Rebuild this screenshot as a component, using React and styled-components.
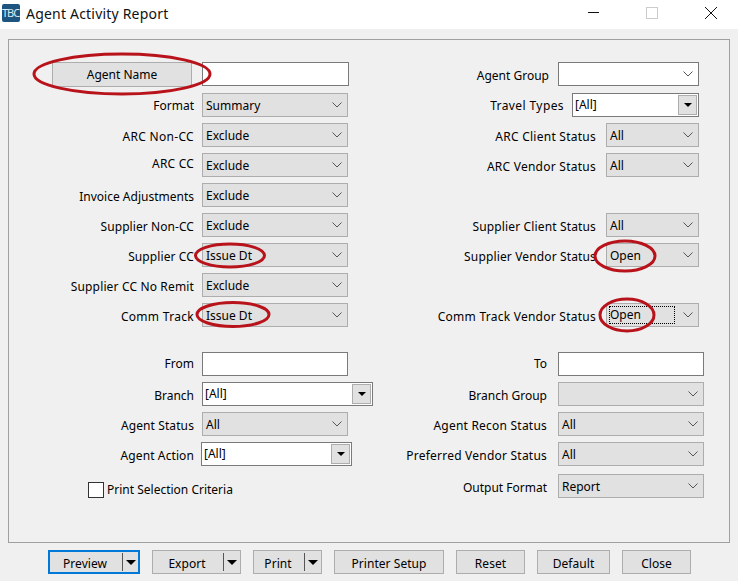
import React from "react";
import styled, { createGlobalStyle } from "styled-components";

const GlobalStyle = createGlobalStyle`
  html, body {
    margin: 0;
    padding: 0;
    background: #f0f0f0;
    font-family: "Noto Sans", "Open Sans", sans-serif;
    font-size: 12px;
    color: #000;
  }
`;

const Window = styled.div`
  position: relative;
  width: 738px;
  height: 581px;
  overflow: hidden;
  background: #f0f0f0;
`;

const TitleBar = styled.div`
  box-sizing: border-box;
  height: 29px;
  background: #fff;
  display: flex;
  align-items: center;
  padding: 0 0 3px 2px;
`;

const AppIcon = styled.div`
  width: 18px;
  height: 18px;
  background: #1d5580;
  border-radius: 2px;
  color: #dfe9f1;
  font-size: 11px;
  letter-spacing: -1px;
  line-height: 18px;
  overflow: hidden;
  white-space: nowrap;
`;

const Title = styled.div`
  margin: 1px 0 0 6px;
  font-size: 14px;
  letter-spacing: 0.2px;
  color: #111;
`;

const WindowButtons = styled.div`
  margin-left: auto;
  display: flex;
  align-items: center;
  padding-right: 21px;
  gap: 47px;
`;

const Panel = styled.div`
  margin: 10px 8px 0;
  height: 504px;
  box-sizing: border-box;
  border: 1px solid #a0a0a0;
  padding-top: 22px;
  display: flex;
`;

const LeftColumn = styled.div`
  width: 364px;
  display: flex;
  flex-direction: column;
  gap: 6px;
`;

const RightColumn = styled.div`
  width: 331px;
  display: flex;
  flex-direction: column;
  gap: 6px;
`;

const Row = styled.div`
  display: flex;
  align-items: center;
  height: 24px;
  flex-shrink: 0;
  margin-top: ${(p) => p.$top || 0}px;
  justify-content: ${(p) => (p.$end ? "flex-end" : "flex-start")};
  padding-right: ${(p) => p.$inset || 0}px;
`;

const Label = styled.span`
  box-sizing: border-box;
  white-space: nowrap;
  text-align: right;
  position: relative;
  top: ${(p) => p.$shift || 0}px;
  letter-spacing: ${(p) => p.$track || 0}px;
  ${(p) => (p.$width ? `width: ${p.$width}px;` : "")}
  margin-right: ${(p) => (p.$gap === undefined ? 8 : p.$gap)}px;
`;

const Button = styled.button`
  box-sizing: border-box;
  height: 24px;
  padding: 0;
  background: #e1e1e1;
  border: 1px solid #adadad;
  font: inherit;
  color: #000;
  display: flex;
  align-items: center;
  justify-content: center;
`;

const NameButton = styled(Button)`
  width: 140px;
  height: 25px;
  margin-left: 43px;
  margin-right: 10px;
`;

const TextInput = styled.div`
  box-sizing: border-box;
  width: ${(p) => p.$width}px;
  height: 24px;
  background: #fff;
  border: 1px solid #7a7a7a;
`;

const Select = styled.div`
  box-sizing: border-box;
  width: ${(p) => p.$width}px;
  height: 24px;
  display: flex;
  align-items: center;
  padding: 0 5px 0 3px;
  background: ${(p) => (p.$white ? "#fff" : "#e1e1e1")};
  border: 1px solid ${(p) => (p.$white ? "#7a7a7a" : "#adadad")};
  svg {
    margin-left: auto;
    flex-shrink: 0;
  }
`;

const FocusText = styled.span`
  width: 66px;
  height: 18px;
  margin-left: -1px;
  box-sizing: border-box;
  border: 1px dotted #000;
  line-height: 15px;
`;

const Combo = styled.div`
  box-sizing: border-box;
  width: ${(p) => p.$width}px;
  height: 24px;
  margin-left: ${(p) => p.$nudge || 0}px;
  background: #fff;
  border: 1px solid #7a7a7a;
  display: flex;
  align-items: center;
  padding: 1px 1px 1px 2px;
`;

const ComboText = styled.span`
  position: relative;
  top: -1px;
`;

const ComboButton = styled.div`
  margin-left: auto;
  width: 19px;
  height: 20px;
  box-sizing: border-box;
  background: #e1e1e1;
  border: 1px solid #adadad;
  display: flex;
  align-items: center;
  justify-content: center;
`;

const CheckRow = styled.div`
  display: flex;
  align-items: center;
  gap: 3px;
  margin: 9px 0 0 79px;
`;

const CheckBox = styled.span`
  box-sizing: border-box;
  width: 16px;
  height: 16px;
  background: #fff;
  border: 1px solid #333;
`;

const Footer = styled.div`
  display: flex;
  gap: 12px;
  margin-top: 7px;
  padding-left: 48px;
`;

const FooterButton = styled(Button)`
  width: ${(p) => p.$width}px;
  letter-spacing: 0.05px;
  ${(p) => (p.$primary ? "border: 2px solid #0078d7;" : "")}
`;

const SplitLabel = styled.span`
  flex: 1;
  text-align: center;
  position: relative;
  top: 1px;
  left: -1px;
`;

const SplitArrow = styled.span`
  width: 17px;
  height: 18px;
  box-sizing: border-box;
  border-left: 1px solid #555;
  margin-right: ${(p) => (p.$primary ? -1 : 0)}px;
  display: flex;
  align-items: center;
  justify-content: center;
`;

const PlainLabel = styled.span`
  position: relative;
  top: 1px;
`;

const Annotations = styled.svg`
  position: absolute;
  left: 0;
  top: 0;
  pointer-events: none;
`;

const Chevron = ({ faint }) => (
  <svg width="10" height="6" viewBox="0 0 10 6">
    <path d="M0.5 0.5 L5 5 L9.5 0.5" fill="none" stroke={faint ? "#8a8a8a" : "#555"} strokeWidth="1" />
  </svg>
);

const Caret = ({ small }) => (
  <svg width={small ? 8 : 10} height={small ? 4 : 5} viewBox="0 0 10 5">
    <path d="M0 0 H10 L5 5 Z" fill="#000" />
  </svg>
);

const SplitButton = ({ width, primary, children }) => (
  <FooterButton $width={width} $primary={primary}>
    <SplitLabel>{children}</SplitLabel>
    <SplitArrow $primary={primary}><Caret /></SplitArrow>
  </FooterButton>
);

const ComboBox = ({ width, nudge }) => (
  <Combo $width={width} $nudge={nudge}>
    <ComboText>[All]</ComboText>
    <ComboButton><Caret small /></ComboButton>
  </Combo>
);

const ovals = [
  [122, 74, 88, 20],
  [230, 255.5, 34.5, 11.5],
  [233, 314.5, 36, 12],
  [625, 256, 30, 15],
  [627, 315, 27, 16],
];

export default function App() {
  return (
    <Window>
      <GlobalStyle />
      <TitleBar>
        <AppIcon>TBC</AppIcon>
        <Title>Agent Activity Report</Title>
        <WindowButtons>
          <svg width="11" height="12" viewBox="0 0 11 12"><path d="M0 5.5 H11" stroke="#111" /></svg>
          <svg width="12" height="12" viewBox="0 0 12 12"><rect x="0.5" y="0.5" width="11" height="11" fill="none" stroke="#ccc" /></svg>
          <svg width="12" height="12" viewBox="0 0 12 12"><path d="M0 0 L12 12 M12 0 L0 12" stroke="#111" /></svg>
        </WindowButtons>
      </TitleBar>
      <Panel>
        <LeftColumn>
          <Row>
            <NameButton>Agent Name</NameButton>
            <TextInput $width={147} />
          </Row>
          <Row $top={1}>
            <Label $width={185}>Format</Label>
            <Select $width={146}>Summary<Chevron /></Select>
          </Row>
          <Row>
            <Label $width={185} $shift={1} $track={0.3}>ARC Non-CC</Label>
            <Select $width={146}>Exclude<Chevron /></Select>
          </Row>
          <Row>
            <Label $width={185} $shift={-2} $track={0.2}>ARC CC</Label>
            <Select $width={146}>Exclude<Chevron /></Select>
          </Row>
          <Row>
            <Label $width={185} $shift={1}>Invoice Adjustments</Label>
            <Select $width={146}>Exclude<Chevron /></Select>
          </Row>
          <Row>
            <Label $width={185} $shift={1} $track={0.07}>Supplier Non-CC</Label>
            <Select $width={146}>Exclude<Chevron /></Select>
          </Row>
          <Row>
            <Label $width={185} $shift={1} $track={0.1}>Supplier CC</Label>
            <Select $width={146}>Issue Dt<Chevron /></Select>
          </Row>
          <Row>
            <Label $width={185} $shift={1} $track={0.15}>Supplier CC No Remit</Label>
            <Select $width={146}>Exclude<Chevron /></Select>
          </Row>
          <Row>
            <Label $width={185} $shift={1} $track={0.3}>Comm Track</Label>
            <Select $width={146}>Issue Dt<Chevron /></Select>
          </Row>
          <Row $top={19}>
            <Label $width={185} $shift={-1}>From</Label>
            <TextInput $width={146} />
          </Row>
          <Row>
            <Label $width={185} $shift={1}>Branch</Label>
            <ComboBox width={171} />
          </Row>
          <Row>
            <Label $width={185} $shift={1} $track={0.1}>Agent Status</Label>
            <Select $width={146}>All<Chevron /></Select>
          </Row>
          <Row>
            <Label $width={185} $shift={1} $track={0.1}>Agent Action</Label>
            <ComboBox width={151} nudge={-1} />
          </Row>
          <CheckRow>
            <CheckBox />
            <span>Print Selection Criteria</span>
          </CheckRow>
        </LeftColumn>
        <RightColumn>
          <Row $end $inset={5}>
            <Label $gap={9} $shift={1}>Agent Group</Label>
            <Select $width={141} $white>&nbsp;<Chevron /></Select>
          </Row>
          <Row $end $inset={5} $top={1}>
            <Label $track={0.4}>Travel Types</Label>
            <ComboBox width={127} />
          </Row>
          <Row $end $inset={5}>
            <Label $gap={10} $shift={1} $track={0.25}>ARC Client Status</Label>
            <Select $width={93}>All<Chevron /></Select>
          </Row>
          <Row $end $inset={5}>
            <Label $gap={10} $shift={1} $track={0.25}>ARC Vendor Status</Label>
            <Select $width={93}>All<Chevron /></Select>
          </Row>
          <Row />
          <Row $end $inset={5}>
            <Label $gap={10} $shift={1} $track={0.14}>Supplier Client Status</Label>
            <Select $width={93}>All<Chevron /></Select>
          </Row>
          <Row $end $inset={5}>
            <Label $gap={10} $shift={1} $track={0.14}>Supplier Vendor Status</Label>
            <Select $width={93}>Open<Chevron /></Select>
          </Row>
          <Row />
          <Row $end $inset={5}>
            <Label $gap={10} $shift={1} $track={0.25}>Comm Track Vendor Status</Label>
            <Select $width={93}><FocusText>Open</FocusText><Chevron /></Select>
          </Row>
          <Row $end $top={19}>
            <Label $gap={11} $shift={-1}>To</Label>
            <TextInput $width={146} />
          </Row>
          <Row $end>
            <Label $gap={11} $shift={1}>Branch Group</Label>
            <Select $width={146}>&nbsp;<Chevron /></Select>
          </Row>
          <Row $end>
            <Label $gap={11} $shift={1} $track={0.22}>Agent Recon Status</Label>
            <Select $width={146}>All<Chevron /></Select>
          </Row>
          <Row $end>
            <Label $gap={11} $shift={1} $track={0.22}>Preferred Vendor Status</Label>
            <Select $width={146}>All<Chevron /></Select>
          </Row>
          <Row $end $top={2}>
            <Label $gap={11} $shift={1}>Output Format</Label>
            <Select $width={146}>Report<Chevron /></Select>
          </Row>
        </RightColumn>
      </Panel>
      <Footer>
        <SplitButton width={92} primary>Preview</SplitButton>
        <SplitButton width={89}>Export</SplitButton>
        <SplitButton width={69}>Print</SplitButton>
        <FooterButton $width={110}><PlainLabel>Printer Setup</PlainLabel></FooterButton>
        <FooterButton $width={69}><PlainLabel>Reset</PlainLabel></FooterButton>
        <FooterButton $width={73}><PlainLabel>Default</PlainLabel></FooterButton>
        <FooterButton $width={69}><PlainLabel>Close</PlainLabel></FooterButton>
      </Footer>
      <Annotations width="738" height="581" viewBox="0 0 738 581">
        {ovals.map(([cx, cy, rx, ry]) => (
          <ellipse key={cx} cx={cx} cy={cy} rx={rx} ry={ry} fill="none" stroke="#b8121b" strokeWidth="3" />
        ))}
      </Annotations>
    </Window>
  );
}
